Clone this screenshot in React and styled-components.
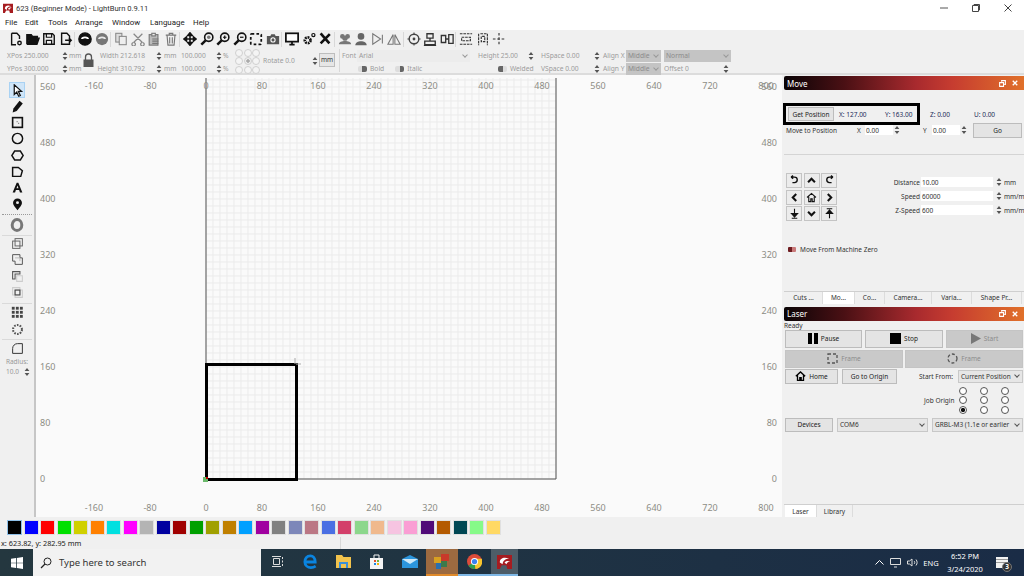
import React from "react";
import styled, { createGlobalStyle } from "styled-components";

const GlobalStyle = createGlobalStyle`
  html, body { margin: 0; padding: 0; background: #f0f0f0; }
  body { font-family: "Noto Sans", "Open Sans", sans-serif; }
  * { box-sizing: border-box; }
`;

const Page = styled.div`
  width: 1024px;
  height: 576px;
  overflow: hidden;
  display: flex;
  flex-direction: column;
  background: #f0f0f0;
  color: #222;
`;

/* ---------- title + menu ---------- */
const TitleBar = styled.div`
  height: 15px;
  padding: 1px 0 0 3px;
  background: #fff;
  display: flex;
  align-items: center;
  gap: 3px;
  font-family: Roboto, sans-serif;
  font-size: 7.600px;
  color: #333;
`;
const WindowButtons = styled.div`
  margin-left: auto;
  display: flex;
`;
const WindowButton = styled.div`
  width: 32px;
  height: 15px;
  display: flex;
  align-items: center;
  justify-content: center;
`;
const MenuBar = styled.div`
  height: 15px;
  background: #fff;
  display: flex;
  align-items: center;
  font-family: Roboto, sans-serif;
  font-size: 7.900px;
  color: #222;
  padding-left: 5px;
`;
const MenuItem = styled.span`
  width: ${({ $w }) => $w}px;
`;

/* ---------- main toolbar ---------- */
const Toolbar = styled.div`
  height: 18px;
  background: #f0f0f0;
  display: flex;
  align-items: center;
  padding-left: 8px;
`;
const ToolSlot = styled.div`
  width: 16.500px;
  height: 16px;
  display: flex;
  align-items: center;
  justify-content: center;
`;
const ToolSep = styled.div`
  width: 1px;
  height: 15px;
  background: #d8d8d8;
  margin-right: 2px;
`;

/* ---------- numeric properties bar ---------- */
const PropBar = styled.div`
  height: 27px;
  border-bottom: 2px solid #dcdcdc;
  background: #f0f0f0;
  display: flex;
  font-size: 6.700px;
  color: #9b9b9b;
`;
const PropGrid = styled.div`
  display: grid;
  grid-template-columns: ${({ $cols }) => $cols};
  grid-auto-rows: 13px;
  align-items: center;
  align-content: ${({ $center }) => ($center ? "center" : "start")};
  white-space: nowrap;
  margin-left: ${({ $ml }) => $ml || 0}px;
  padding-top: ${({ $center }) => ($center ? 0 : 1)}px;
`;
const Spin = styled.svg`
  display: block;
  width: 6px;
  height: 10px;
`;
const SpinBox = () => (
  <Spin viewBox="0 0 6 10">
    <path d="M3 1 5.400 4H.6zM3 9 .6 6h4.800z" fill="#555" />
  </Spin>
);
const LockBox = styled.div`
  width: 11px;
  margin-left: 1px;
  display: flex;
  align-items: center;
  justify-content: center;
`;
const Anchor = styled.div`
  margin-left: 3px;
  width: 27px;
  display: grid;
  grid-template-columns: repeat(3, 8.500px);
  grid-auto-rows: 8.300px;
  align-content: start;
  padding-top: 1px;
`;
const AnchorDot = styled.div`
  width: 8px;
  height: 8px;
  border-radius: 50%;
  border: 1px solid #d0d0d0;
  background: ${({ $on }) => ($on ? "radial-gradient(circle, #aaa 35%, #eee 45%)" : "#f4f4f4")};
`;
const UnitButton = styled.div`
  align-self: center;
  margin: -2px 0 0 1px;
  width: 16px;
  height: 14px;
  border: 1px solid #bdbdbd;
  background: #e6e6e6;
  color: #333;
  font-size: 6.500px;
  display: flex;
  align-items: center;
  justify-content: center;
`;
const BarSep = styled.div`
  width: 1px;
  margin: 1px 2px 1px 4px;
  background: #d8d8d8;
`;
const PropCombo = styled.div`
  height: 12px;
  background: ${({ $grey }) => ($grey ? "#c4c4c4" : "#ececec")};
  color: ${({ $grey }) => ($grey ? "#8b8b8b" : "#9b9b9b")};
  display: flex;
  align-items: center;
  justify-content: space-between;
  padding: 0 3px 0 2px;
  grid-column: ${({ $col }) => $col};
  &::after {
    content: "";
    width: 3px;
    height: 3px;
    margin-top: -2px;
    border-right: 1px solid #999;
    border-bottom: 1px solid #999;
    transform: rotate(45deg);
  }
`;
const MiniToggle = styled.span`
  display: inline-block;
  flex: none;
  width: 9px;
  height: 6px;
  border-radius: 2px;
  background: ${({ $left }) =>
    $left ? "linear-gradient(90deg, #ddd 50%, #666 50%)" : "linear-gradient(90deg, #666 55%, #ddd 55%)"};
  margin-right: 3px;
`;
const Cell = styled.div`
  display: flex;
  align-items: center;
  grid-column: ${({ $col }) => $col || "auto"};
  justify-content: ${({ $end, $between }) => ($end ? "flex-end" : $between ? "space-between" : "flex-start")};
  padding-left: ${({ $pl }) => $pl || 0}px;
  padding-right: ${({ $pr }) => $pr || 0}px;
`;
const GapText = styled.span`
  margin-right: ${({ $mr }) => $mr}px;
`;

/* ---------- body ---------- */
const Body = styled.div`
  height: 442px;
  display: flex;
`;
const ToolColumn = styled.div`
  width: 36px;
  flex: none;
  border-right: 2px solid #c6c6c6;
  background: #f0f0f0;
  display: flex;
  flex-direction: column;
  align-items: center;
  padding-top: 7px;
`;
const SideTool = styled.div`
  width: 16px;
  height: 16px;
  margin-bottom: 0.300px;
  display: flex;
  align-items: center;
  justify-content: center;
  background: ${({ $active }) => ($active ? "#cfe5f8" : "transparent")};
  border: 1px solid ${({ $active }) => ($active ? "#a9d2f3" : "transparent")};
`;
const SideSep = styled.div`
  width: 30px;
  height: 1px;
  margin: ${({ $m }) => $m};
  border-top: 1px ${({ $dotted }) => ($dotted ? "dotted #999" : "solid #dadada")};
`;
const RadiusLabel = styled.div`
  font-size: 6.500px;
  color: #999;
  line-height: 9px;
`;
const RadiusValue = styled.div`
  width: 30px;
  display: flex;
  align-items: center;
  justify-content: space-between;
  font-size: 6.500px;
  line-height: 11px;
  color: #999;
  padding: 0 2px 0 4px;
`;

const CanvasSvg = styled.svg`
  display: block;
  flex: none;
  width: 746px;
  height: 442px;
  background: #fafafa;
  font-family: "Noto Sans", sans-serif;
`;

/* ---------- right dock ---------- */
const Dock = styled.div`
  width: 242px;
  flex: none;
  background: #f0f0f0;
  display: flex;
  flex-direction: column;
  font-size: 6.500px;
  color: #333;
  padding-left: 2px;
`;
const DockTitle = styled.div`
  height: 14px;
  margin-top: ${({ $mt }) => $mt}px;
  flex: none;
  border-radius: 2px 0 0 2px;
  background: linear-gradient(90deg, #0a0406 0%, #4a1014 25%, #a82a2e 55%, #c63c30 70%, #e0702a 100%);
  color: #fff;
  font-size: 8px;
  padding: 0 6px 0 3px;
  display: flex;
  align-items: center;
  justify-content: space-between;
`;
const TitleIcons = styled.div`
  display: flex;
  gap: 6px;
  align-items: center;
`;
const PositionRow = styled.div`
  margin-top: 13px;
  display: flex;
  align-items: center;
  height: 22px;
  color: #1b2b58;
`;
const PositionBox = styled.div`
  width: 137px;
  height: 22px;
  margin-left: -1px;
  border: 3px solid #000;
  display: flex;
  align-items: center;
  padding-left: 2px;
`;
const DockButton = styled.div`
  flex: none;
  width: ${({ $w }) => $w}px;
  height: ${({ $h }) => $h || 15}px;
  margin-left: ${({ $ml }) => $ml || 0}px;
  border: 1px solid ${({ $off }) => ($off ? "#c4c4c4" : "#bcbcbc")};
  background: ${({ $off }) => ($off ? "#c9c9c9" : "#e4e4e4")};
  color: ${({ $off }) => ($off ? "#8c8c8c" : "#222")};
  display: flex;
  align-items: center;
  justify-content: center;
  gap: 3px;
  white-space: nowrap;
`;
const Coord = styled.span`
  flex: none;
  width: ${({ $w }) => ($w ? `${$w}px` : "auto")};
  margin-left: ${({ $ml }) => $ml || 0}px;
  white-space: nowrap;
`;
const MoveToRow = styled.div`
  margin-top: -2px;
  height: 14px;
  display: flex;
  align-items: center;
`;
const NumInput = styled.div`
  flex: none;
  width: ${({ $w }) => $w}px;
  height: 10px;
  margin-right: ${({ $mr }) => $mr || 1}px;
  background: #fff;
  display: flex;
  align-items: center;
  padding-left: 1px;
`;
const Rule = styled.div`
  height: 1px;
  margin-top: 17px;
  background: #d4d4d4;
`;
const JogRow = styled.div`
  margin-top: 18px;
  display: flex;
`;
const JogGrid = styled.div`
  margin-left: 2px;
  display: grid;
  grid-template-columns: repeat(3, 16px);
  grid-auto-rows: 15px;
  gap: 1.700px;
`;
const JogKey = styled.div`
  border: 1px solid #c4c4c4;
  background: #ececec;
  display: flex;
  align-items: center;
  justify-content: center;
`;
const JogFields = styled.div`
  display: grid;
  margin: 2px 0 0 46.600px;
  grid-template-columns: 37px 75px 6px auto;
  grid-auto-rows: 14px;
  align-items: center;
  white-space: nowrap;
`;
const FieldLabel = styled.div`
  text-align: right;
  padding-right: 1px;
`;
const ZeroRow = styled.div`
  margin: 24px 0 0 4px;
  height: 9px;
  display: flex;
  align-items: center;
  gap: 4px;
`;
const ZeroToggle = styled.span`
  width: 8px;
  height: 5px;
  border-radius: 1px;
  background: linear-gradient(90deg, #6e1c20 55%, #c97a7a 55%);
`;
const TabStrip = styled.div`
  height: 13px;
  flex: none;
  margin-top: ${({ $mt }) => $mt || 0}px;
  border-top: 1px solid #cfcfcf;
  display: flex;
  align-items: stretch;
`;
const Tab = styled.div`
  width: ${({ $w }) => $w}px;
  margin-left: ${({ $ml }) => $ml || 0}px;
  background: ${({ $on }) => ($on ? "#fff" : "#f0f0f0")};
  border-right: 1px solid #dcdcdc;
  display: flex;
  align-items: center;
  justify-content: center;
  white-space: nowrap;
`;
const ReadyText = styled.div`
  height: 9px;
  line-height: 9px;
`;
const ButtonRow = styled.div`
  margin-top: ${({ $mt }) => $mt ?? 2}px;
  padding-left: 1px;
  display: flex;
  align-items: center;
`;
const OriginArea = styled.div`
  display: flex;
  align-items: center;
  height: 31px;
  margin-top: 1px;
`;
const OriginLabel = styled.div`
  margin-left: 140px;
  width: 28.500px;
  white-space: nowrap;
`;
const RadioGrid = styled.div`
  display: grid;
  grid-template-columns: repeat(3, 21px);
  grid-auto-rows: 9.700px;
  justify-items: center;
  align-items: center;
`;
const Radio = styled.div`
  width: 8px;
  height: 8px;
  border-radius: 50%;
  border: 1px solid #555;
  background: ${({ $on }) => ($on ? "radial-gradient(circle, #111 45%, #fff 55%)" : "#fff")};
`;
const Combo = styled.div`
  flex: none;
  width: ${({ $w }) => $w}px;
  height: ${({ $h }) => $h || 13}px;
  margin-left: ${({ $ml }) => $ml || 0}px;
  background: #e6e6e6;
  border: 1px solid #c8c8c8;
  display: flex;
  align-items: center;
  justify-content: space-between;
  padding: 0 3px 0 2px;
  overflow: hidden;
  white-space: nowrap;
  &::after {
    content: "";
    flex: none;
    width: 3px;
    height: 3px;
    margin: -2px 0 0 2px;
    border-right: 1px solid #555;
    border-bottom: 1px solid #555;
    transform: rotate(45deg);
  }
`;
const DockSpacer = styled.div`
  flex: 1;
`;

/* ---------- palette + status ---------- */
const Palette = styled.div`
  height: 20px;
  background: #f0f0f0;
  display: flex;
  align-items: center;
  padding-left: 8px;
  gap: 3.500px;
`;
const Swatch = styled.div`
  width: 13px;
  height: 13px;
  background: ${({ $c }) => $c};
  outline: 1px solid ${({ $first }) => ($first ? "#8fc0e8" : "#e0e0e0")};
`;
const StatusBar = styled.div`
  height: 12px;
  background: #f0f0f0;
  display: flex;
  align-items: center;
  font-size: 7.300px;
  color: #222;
  padding-left: 1px;
`;
const StatusText = styled.div`
  width: 340px;
  height: 12px;
  line-height: 12px;
  border-right: 1px solid #d8d8d8;
`;

/* ---------- windows taskbar ---------- */
const Taskbar = styled.div`
  height: 27px;
  background: linear-gradient(90deg, #24373f 0%, #203442 40%, #1a2c46 100%);
  display: flex;
  align-items: stretch;
  color: #fff;
`;
const StartButton = styled.div`
  width: 33px;
  display: flex;
  align-items: center;
  justify-content: center;
`;
const SearchBox = styled.div`
  width: 228px;
  background: #f2f2f2;
  color: #333;
  font-size: 9.500px;
  display: flex;
  align-items: center;
  gap: 7px;
  padding-left: 7px;
`;
const TaskIcon = styled.div`
  width: ${({ $w }) => $w || 33}px;
  background: ${({ $bg }) => $bg || "transparent"};
  border-bottom: 2px solid ${({ $line }) => $line || "transparent"};
  display: flex;
  align-items: center;
  justify-content: center;
`;
const Tray = styled.div`
  margin-left: auto;
  display: flex;
  align-items: center;
  font-size: 7.500px;
`;
const TrayItem = styled.div`
  width: ${({ $w }) => $w}px;
  display: flex;
  align-items: center;
  justify-content: center;
`;
const Clock = styled.div`
  width: 46px;
  text-align: center;
  line-height: 13px;
  font-size: 7.500px;
`;
const Badge = styled.div`
  position: absolute;
  right: -4px;
  bottom: -4px;
  width: 10px;
  height: 10px;
  border-radius: 50%;
  background: #333;
  border: 1px solid #777;
  color: #fff;
  font-size: 6.500px;
  font-weight: 700;
  line-height: 8px;
  text-align: center;
`;
const NotifyIcon = styled.div`
  position: relative;
  width: 12px;
  height: 11px;
  margin: 0 16px 0 8px;
  background: linear-gradient(#f2f2f2 2px, #999 2px, #999 3px, #f2f2f2 3px, #f2f2f2 5px, #999 5px, #999 6px, #f2f2f2 6px);
`;

/* ---------- icons ---------- */
const Ico = ({ s = 14, vb = 16, children, ...rest }) => (
  <svg width={s} height={s} viewBox={`0 0 ${vb} ${vb}`} fill="none" stroke="#111" strokeWidth="1.600" {...rest}>
    {children}
  </svg>
);

const toolbarIcons = [
  [
    <><path d="M3 1.500h6l3 3V8M3 1.500V14.500h5" /><circle cx="12" cy="12.500" r="2" /></>,
    <path d="M1 14V3h5l1.500 2H13v2H4.500L2 14h10.500l2.500-7H4.500" fill="#111" />,
    <><path d="M2 2h10l2 2v10H2z" /><path d="M5 2v4h6V2M5 14V9.500h6V14" strokeWidth="1.400" /></>,
    <><path d="M3 1.500h6l3 3v9.500H3z" /><path d="M7 9.500h7M11.500 7l2.500 2.500L11.500 12" /></>,
  ],
  [
    <><circle cx="8" cy="8" r="7" fill="#111" /><path d="M3.500 8a4.500 3 0 0 1 9 0l-2 0a3 1.500 0 0 0-5 0z" fill="#fff" stroke="none" /></>,
    <><circle cx="8" cy="8" r="7" fill="#777" stroke="none" /><path d="M3.500 8a4.500 3 0 0 1 9 0l-2 0a3 1.500 0 0 0-5 0z" fill="#e8e8e8" stroke="none" /></>,
  ],
  [
    <g stroke="#888" strokeWidth="1.200"><rect x="2" y="1.500" width="7" height="10" fill="#ddd" /><rect x="6" y="5" width="8" height="9.500" fill="#eee" /></g>,
    <path d="M3 2l10 10M13 2 3 12M3 12a2 2 0 1 0 .1 0M13 12a2 2 0 1 0 .1 0" stroke="#888" strokeWidth="1.400" />,
    <g stroke="#777" strokeWidth="1.300"><rect x="2.500" y="3" width="10" height="12" fill="#bbb" /><rect x="5.500" y="1.500" width="4" height="3" fill="#eee" /><path d="M6 8h7M6 10.500h7M6 13h7" /></g>,
    <g stroke="#777" strokeWidth="1.300"><path d="M2 3.500h12M6 3V1.500h4V3M3.500 4l1 11h7l1-11M6.500 6v7M9.500 6v7" /></g>,
  ],
  [
    <path d="M8 1v14M1 8h14M8 1 5.500 4h5zM8 15l-2.500-3h5zM1 8l3-2.500v5zM15 8l-3-2.500v5z" fill="#111" strokeWidth="1.800" />,
    <><circle cx="10" cy="6" r="4.700" strokeWidth="1.800" /><circle cx="10" cy="6" r="2" fill="#777" stroke="none" /><path d="M6.500 9.500 1.500 14.500" strokeWidth="2.800" /></>,
    <><circle cx="10" cy="6" r="4.700" strokeWidth="1.800" /><path d="M8 6h4M10 4v4" strokeWidth="1.400" /><path d="M6.500 9.500 1.500 14.500" strokeWidth="2.800" /></>,
    <><circle cx="10" cy="6" r="4.700" strokeWidth="1.800" /><path d="M8 6h4" strokeWidth="1.400" /><path d="M6.500 9.500 1.500 14.500" strokeWidth="2.800" /></>,
    <rect x="2" y="2" width="12" height="12" rx="1" strokeDasharray="3 2.500" strokeWidth="2" />,
    <><path d="M1 4.500h4l1-2h4l1 2h4v9.500H1z" fill="#555" stroke="none" /><circle cx="8" cy="9" r="3" fill="#fff" stroke="none" /><circle cx="8" cy="9" r="1.800" fill="#555" stroke="none" /></>,
  ],
  [
    <><rect x="1" y="1.500" width="14" height="9.500" fill="#fff" strokeWidth="2" /><path d="M5 14.500h6M8 11v3" strokeWidth="2" /></>,
    <><circle cx="6.500" cy="9.500" r="3.300" strokeWidth="3" strokeDasharray="2 1" /><circle cx="13" cy="3.500" r="1.800" strokeWidth="1.400" /></>,
    <path d="M3 1.500 13 13M13.500 2.500 3 13" strokeWidth="3" />,
  ],
  [
    <g fill="#777" stroke="none"><circle cx="5" cy="5" r="2.700" /><circle cx="11" cy="5" r="2.700" /><circle cx="8" cy="7" r="3" /><path d="M1 14c0-5 14-5 14 0z" /></g>,
    <g fill="#666" stroke="none"><circle cx="8" cy="5" r="3.800" /><path d="M1.500 15c0-6 13-6 13 0z" /></g>,
    <path d="M2 2v12l9-6zM13 3v10" stroke="#777" strokeWidth="1.200" />,
    <path d="M1 14 7 3v11zM15 14 9 3v11z" stroke="#777" strokeWidth="1.200" />,
  ],
  [
    <><circle cx="8" cy="8" r="5.500" stroke="#444" /><circle cx="8" cy="8" r="1.600" fill="#444" stroke="none" /><path d="M8 .5v3M8 12.500v3M.5 8h3M12.500 8h3" stroke="#444" strokeWidth="1.200" /></>,
    <path d="M4.500 2h7v5h-7zM8 7v3M2 10.500h12v4H2zM1 15.500h14" stroke="#333" strokeWidth="1.500" />,
    <path d="M1.500 4h5v8h-5zM7 8h3M10 3h5v10h-5z" stroke="#333" strokeWidth="1.500" />,
  ],
  [
    <path d="M1 2h14M1 14h14M3 6h10v4H3z" stroke="#333" strokeWidth="1.300" strokeDasharray="3 1" />,
    <path d="M3 2v13M13 2v13M5 2h8M6 5v6h4V5z" stroke="#333" strokeWidth="1.300" strokeDasharray="3 1" />,
    <path d="M8 1v14M1 8h14" stroke="#333" strokeWidth="1.300" strokeDasharray="3 2" />,
  ],
];

const LightBurnLogo = ({ s = 10 }) => (
  <svg width={s} height={s} viewBox="0 0 16 16">
    <path d="M0 1h16v15H11l-1-4H5L3 16H0z" fill="#a61c20" />
    <path d="M3 9C3 4 8 3 13 5 9 5 6 7 6 11zM8 9c2-2 4-2 6-1-2 0-3 1-4 3z" fill="#fff" />
  </svg>
);

const sideTools = [
  <path d="M4 1v12l3-3 2.500 5 2-1-2.500-5h4z" fill="#fff" stroke="#111" strokeWidth="1.500" />,
  <path d="M2 15.500l1-5L10.500 1l4 3.200L7 13.500z" fill="#111" stroke="none" />,
  <><rect x="2" y="2" width="12" height="12" strokeWidth="2" /><path d="M7 7h1M9 9h1" strokeWidth="1" /></>,
  <circle cx="8" cy="8" r="6.300" strokeWidth="1.800" />,
  <path d="M4.500 2.500h7L15 8l-3.500 5.500h-7L1 8z" strokeWidth="1.800" />,
  <path d="M2 3h7l5 4-2 7H2z" strokeWidth="1.800" />,
  <path d="M2 14 7 2h2l5 12h-3l-1-3H6l-1 3zM6.800 9h2.400L8 5.500z" fill="#111" fillRule="evenodd" stroke="none" />,
  <path d="M8 15c-3-4-5.500-6.500-5.500-9a5.500 5.500 0 0 1 11 0c0 2.500-2.500 5-5.500 9zm0-7.500a1.800 1.800 0 1 0 0-3.600 1.800 1.800 0 0 0 0 3.600z" fill="#111" fillRule="evenodd" stroke="none" />,
];
const booleanTools = [
  <g stroke="#666" strokeWidth="1.200"><rect x="2" y="5" width="9" height="9" /><rect x="5" y="2" width="9" height="9" /></g>,
  <g stroke="#555" strokeWidth="1.200"><path d="M2 2h9v4h3v8H5v-4H2z" /><path d="M5 6h6v4" stroke="#bbb" /></g>,
  <g strokeWidth="1.300"><path d="M2 2h9v3H5v6H2z" stroke="#555" /><path d="M7 7h7v7H7z" stroke="#ccc" /></g>,
  <g strokeWidth="1.300"><path d="M2 2h9v9H2zM5 5h9v9H5z" stroke="#ccc" /><rect x="5" y="5" width="6" height="6" stroke="#444" /></g>,
];
const jogIcons = [
  <path d="M3 3h5a4 4 0 0 1 0 8H5M3 3l3-2M3 3l3 2.500" strokeWidth="2" />,
  <path d="M3 10.500 8 5.500l5 5" strokeWidth="3" />,
  <path d="M13 3H8a4 4 0 0 0 0 8h3M13 3l-3-2M13 3l-3 2.500" strokeWidth="2" />,
  <path d="M10.500 3 5.500 8l5 5" strokeWidth="3" />,
  <path d="M1.500 8 8 2l6.500 6M4 7v7h3v-4h2v4h3V7" strokeWidth="1.600" />,
  <path d="M5.500 3l5 5-5 5" strokeWidth="3" />,
  <path d="M8 1v9M3.500 8 8 13l4.500-5zM4 15h8" fill="#111" strokeWidth="1.600" />,
  <path d="M3 5.500l5 5 5-5" strokeWidth="3" />,
  <path d="M8 15V6M3.500 8 8 3l4.500 5zM4 1h8" fill="#111" strokeWidth="1.600" />,
];

const swatches = [
  "#000000", "#0000ff", "#ff0000", "#00e000", "#d0d000", "#ff8000", "#00e0e0", "#ff00ff", "#b4b4b4", "#0000a0",
  "#a00000", "#00a000", "#a0a000", "#c08000", "#00a0ff", "#a000a0", "#808080", "#7d87b9", "#bb7784", "#4a6fe3",
  "#d33f6a", "#8cd78c", "#f0b98d", "#f6c4e1", "#fa9ed4", "#500a78", "#b45a00", "#004754", "#86fa88", "#ffd964",
];

const range = (n) => Array.from({ length: n }, (_, i) => i);
const toX = (v) => 206 + v * 0.7;
const toY = (v) => 479 - v * 0.7;
const xLabels = [-160, -80, 0, 80, 160, 240, 320, 400, 480, 560, 640, 720, 800];
const yLabels = [560, 480, 400, 320, 240, 160, 80, 0];

// bed, grid and rulers, drawn in page coordinates
const Canvas = () => (
  <CanvasSvg viewBox="36 75 746 442">
    {range(51).map((i) => (
      <line key={`v${i}`} x1={206 + i * 7} x2={206 + i * 7} y1="78" y2="479" stroke="#ebebeb" />
    ))}
    {range(58).map((i) => (
      <line key={`h${i}`} x1="206" x2="556" y1={479 - i * 7} y2={479 - i * 7} stroke="#ebebeb" />
    ))}
    <path d="M206 78V479H556V78" stroke="#555" strokeWidth="1" fill="none" />
    <rect x="206.500" y="364.500" width="90" height="115" fill="none" stroke="#000" strokeWidth="3" />
    <path d="M295 358v6M296 364h5" stroke="#aaa" />
    <rect x="203" y="477" width="5" height="5" fill="#6cba6c" />
    <rect x="206" y="477" width="2" height="2" fill="#c00" />
    <g fontSize="9" fill="#8d8d85" textAnchor="middle">
      {xLabels.map((v) => (
        <text key={`t${v}`} x={toX(v)} y="89">{v}</text>
      ))}
      {xLabels.map((v) => (
        <text key={`b${v}`} x={toX(v)} y="511">{v}</text>
      ))}
    </g>
    <g fontSize="9" fill="#8d8d85">
      {yLabels.map((v) => (
        <text key={`l${v}`} x="40" y={toY(v) + 3}>{v}</text>
      ))}
    </g>
    <g fontSize="9" fill="#8d8d85" textAnchor="end">
      {yLabels.map((v) => (
        <text key={`r${v}`} x="777" y={toY(v) + 3}>{v}</text>
      ))}
    </g>
  </CanvasSvg>
);

const FloatClose = () => (
  <TitleIcons>
    <svg width="7" height="7" viewBox="0 0 8 8" fill="none" stroke="#fff" strokeWidth="1.200"><path d="M3 2V.7h4.300V5H6M.7 3h4.500v4.300H.7z" /></svg>
    <svg width="6" height="6" viewBox="0 0 8 8" fill="none" stroke="#fff" strokeWidth="1.800"><path d="M1 1l6 6M7 1 1 7" /></svg>
  </TitleIcons>
);

const PropertyBar = () => (
  <PropBar>
    <PropGrid $cols="55px 6px 14px" $ml={7}>
      <span>XPos 250.000</span><SpinBox /><Cell $pl={1}>mm</Cell>
      <span>YPos 300.000</span><SpinBox /><Cell $pl={1}>mm</Cell>
    </PropGrid>
    <LockBox>
      <svg width="11" height="15" viewBox="0 0 11 15" fill="none">
        <path d="M2.500 7V4a3 3 0 0 1 6 0v3" stroke="#555" strokeWidth="1.300" />
        <rect x=".5" y="6.500" width="10" height="7.500" fill="#555" />
      </svg>
    </LockBox>
    <PropGrid $cols="59px 6px 19px 35px 6px 10px" $ml={3}>
      <Cell $end $pr={11}>Width 212.618</Cell><SpinBox /><Cell $pl={2}>mm</Cell><span>100.000</span><SpinBox /><Cell $pl={1}>%</Cell>
      <Cell $end $pr={11}>Height 310.792</Cell><SpinBox /><Cell $pl={2}>mm</Cell><span>100.000</span><SpinBox /><Cell $pl={1}>%</Cell>
    </PropGrid>
    <Anchor>
      {range(9).map((i) => (
        <AnchorDot key={i} $on={i === 4} />
      ))}
    </Anchor>
    <PropGrid $cols="49px 6px" $ml={1} $center>
      <Cell>Rotate 0.0</Cell><SpinBox />
    </PropGrid>
    <UnitButton>mm</UnitButton>
    <BarSep />
    <PropGrid $cols="15px 113px 8px 39px 11px 6px 7px 53px 6px 3px 23px 35px 3px 67px">
      <Cell $col={1}>Font</Cell>
      <PropCombo $col={2}>Arial</PropCombo>
      <Cell $col={4}>Height 25.00</Cell>
      <Cell $col={6}><SpinBox /></Cell>
      <Cell $col={8}>HSpace 0.00</Cell>
      <Cell $col={9}><SpinBox /></Cell>
      <Cell $col={11}>Align X</Cell>
      <PropCombo $col={12} $grey>Middle</PropCombo>
      <PropCombo $col={14} $grey>Normal</PropCombo>
      <Cell $col={2} $pl={1}>
        <MiniToggle $left /><GapText $mr={11}>Bold</GapText>
        <MiniToggle $left />Italic
      </Cell>
      <Cell $col="4 / 7" $pl={20}><MiniToggle />Welded</Cell>
      <Cell $col={8}>VSpace 0.00</Cell>
      <Cell $col={9}><SpinBox /></Cell>
      <Cell $col={11}>Align Y</Cell>
      <PropCombo $col={12} $grey>Middle</PropCombo>
      <Cell $col={14} $between $pr={2}>Offset 0<SpinBox /></Cell>
    </PropGrid>
  </PropBar>
);

export default function App() {
  return (
    <Page>
      <GlobalStyle />
      <TitleBar>
        <LightBurnLogo />
        <span>623 (Beginner Mode) - LightBurn 0.9.11</span>
        <WindowButtons>
          <WindowButton>
            <svg width="8" height="8" viewBox="0 0 8 8"><path d="M0 4h8" stroke="#555" /></svg>
          </WindowButton>
          <WindowButton>
            <svg width="8" height="8" viewBox="0 0 8 8" fill="none" stroke="#444"><path d="M2 1.500V.5h5.500V6H6.500M.5 1.500H6.500V7.500H.5z" /></svg>
          </WindowButton>
          <WindowButton>
            <svg width="8" height="8" viewBox="0 0 8 8"><path d="M.5.5l7 7M7.500.5l-7 7" stroke="#444" /></svg>
          </WindowButton>
        </WindowButtons>
      </TitleBar>
      <MenuBar>
        <MenuItem $w={20}>File</MenuItem>
        <MenuItem $w={23}>Edit</MenuItem>
        <MenuItem $w={27}>Tools</MenuItem>
        <MenuItem $w={37}>Arrange</MenuItem>
        <MenuItem $w={38}>Window</MenuItem>
        <MenuItem $w={43}>Language</MenuItem>
        <MenuItem $w={20}>Help</MenuItem>
      </MenuBar>
      <Toolbar>
        {toolbarIcons.map((group, g) => (
          <React.Fragment key={g}>
            {group.map((icon, i) => (
              <ToolSlot key={i}><Ico s={14}>{icon}</Ico></ToolSlot>
            ))}
            {g < toolbarIcons.length - 1 && <ToolSep />}
          </React.Fragment>
        ))}
      </Toolbar>
      <PropertyBar />
      <Body>
        <ToolColumn>
          {sideTools.map((icon, i) => (
            <SideTool key={i} $active={i === 0}><Ico s={13}>{icon}</Ico></SideTool>
          ))}
          <SideSep $dotted $m="2px 0" />
          <SideTool>
            <Ico s={14}><ellipse cx="8" cy="8" rx="5.500" ry="6.200" stroke="#777" strokeWidth="3.400" /></Ico>
          </SideTool>
          <SideSep $m="1px 0 0" />
          {booleanTools.map((icon, i) => (
            <SideTool key={i}><Ico s={13}>{icon}</Ico></SideTool>
          ))}
          <SideSep $m="2px 0 1px" />
          <SideTool>
            <Ico s={13}>
              <g fill="#444" stroke="none">
                {range(9).map((i) => (
                  <rect key={i} x={1 + (i % 3) * 5} y={1 + Math.floor(i / 3) * 5} width="3.500" height="3.500" />
                ))}
              </g>
            </Ico>
          </SideTool>
          <SideTool>
            <Ico s={13}><circle cx="8" cy="8" r="5.500" stroke="#555" strokeWidth="2.500" strokeDasharray="2 1.500" /></Ico>
          </SideTool>
          <SideSep $m="1.500px 0 1px" />
          <SideTool>
            <Ico s={13}><path d="M2 14V8a6 6 0 0 1 6-6h6v12z" stroke="#333" strokeWidth="1.200" /></Ico>
          </SideTool>
          <RadiusLabel>Radius:</RadiusLabel>
          <RadiusValue>10.0<SpinBox /></RadiusValue>
        </ToolColumn>
        <Canvas />
        <Dock>
          <DockTitle $mt={1}>Move<FloatClose /></DockTitle>
          <PositionRow>
            <PositionBox>
              <DockButton $w={46} $h={14}>Get Position</DockButton>
              <Coord $w={46} $ml={5}>X: 127.00</Coord>
              <Coord>Y: 163.00</Coord>
            </PositionBox>
            <Coord $w={44} $ml={10}>Z: 0.00</Coord>
            <Coord>U: 0.00</Coord>
          </PositionRow>
          <MoveToRow>
            <Coord $w={71} $ml={2}>Move to Position</Coord>
            <Coord $w={8}>X</Coord>
            <NumInput $w={28}>0.00</NumInput>
            <SpinBox />
            <Coord $w={9} $ml={23}>Y</Coord>
            <NumInput $w={28}>0.00</NumInput>
            <SpinBox />
            <DockButton $w={49} $ml={6}>Go</DockButton>
          </MoveToRow>
          <Rule />
          <JogRow>
            <JogGrid>
              {jogIcons.map((icon, i) => (
                <JogKey key={i}><Ico s={11}>{icon}</Ico></JogKey>
              ))}
            </JogGrid>
            <JogFields>
              <FieldLabel>Distance</FieldLabel><NumInput $w={72}>10.00</NumInput><SpinBox /><Coord $ml={2}>mm</Coord>
              <FieldLabel>Speed</FieldLabel><NumInput $w={72}>60000</NumInput><SpinBox /><Coord $ml={2}>mm/m</Coord>
              <FieldLabel>Z-Speed</FieldLabel><NumInput $w={72}>600</NumInput><SpinBox /><Coord $ml={2}>mm/m</Coord>
            </JogFields>
          </JogRow>
          <ZeroRow>
            <ZeroToggle />
            <span>Move From Machine Zero</span>
          </ZeroRow>
          <TabStrip $mt={36.500}>
            <Tab $w={38} $ml={1}>Cuts ...</Tab>
            <Tab $w={32} $on>Mo...</Tab>
            <Tab $w={30}>Co...</Tab>
            <Tab $w={47}>Camera...</Tab>
            <Tab $w={40}>Varia...</Tab>
            <Tab $w={50}>Shape Pr...</Tab>
          </TabStrip>
          <DockTitle $mt={3}>Laser<FloatClose /></DockTitle>
          <ReadyText>Ready</ReadyText>
          <ButtonRow $mt={0}>
            <DockButton $w={77} $h={18}>
              <svg width="10" height="11" viewBox="0 0 10 11"><path d="M0 0h4v11H0zM6 0h4v11H6z" /></svg>Pause
            </DockButton>
            <DockButton $w={78} $h={18} $ml={3}>
              <svg width="11" height="11" viewBox="0 0 11 11"><path d="M0 0h11v11H0z" /></svg>Stop
            </DockButton>
            <DockButton $w={77} $h={18} $ml={3} $off>
              <svg width="10" height="11" viewBox="0 0 10 11"><path d="M0 0l10 5.500L0 11z" fill="#777" /></svg>Start
            </DockButton>
          </ButtonRow>
          <ButtonRow>
            <DockButton $w={118} $h={18} $off>
              <svg width="11" height="11" viewBox="0 0 11 11" fill="none"><rect x="1" y="1" width="9" height="9" stroke="#555" strokeWidth="1.300" strokeDasharray="3 2" /></svg>Frame
            </DockButton>
            <DockButton $w={118} $h={18} $ml={2} $off>
              <svg width="11" height="11" viewBox="0 0 11 11" fill="none"><circle cx="5.500" cy="5.500" r="4.500" stroke="#555" strokeWidth="1.300" strokeDasharray="3 2" /></svg>Frame
            </DockButton>
          </ButtonRow>
          <ButtonRow $mt={1}>
            <DockButton $w={53}>
              <svg width="11" height="10" viewBox="0 0 16 15" fill="none" stroke="#000" strokeWidth="2"><path d="M1 8l7-6.500L15 8M3.500 6.500V14H7v-4h2v4h3.500V6.500" /></svg>Home
            </DockButton>
            <DockButton $w={55} $ml={4}>Go to Origin</DockButton>
            <Coord $w={39} $ml={22}>Start From:</Coord>
            <Combo $w={65}>Current Position</Combo>
          </ButtonRow>
          <OriginArea>
            <OriginLabel>Job Origin</OriginLabel>
            <RadioGrid>
              {range(9).map((i) => (
                <Radio key={i} $on={i === 6} />
              ))}
            </RadioGrid>
          </OriginArea>
          <ButtonRow>
            <DockButton $w={48} $h={14}>Devices</DockButton>
            <Combo $w={91} $h={14} $ml={4}>COM6</Combo>
            <Combo $w={91} $h={14} $ml={4}>GRBL-M3 (1.1e or earlier</Combo>
          </ButtonRow>
          <DockSpacer />
          <TabStrip>
            <Tab $w={32} $ml={1} $on>Laser</Tab>
            <Tab $w={36}>Library</Tab>
          </TabStrip>
        </Dock>
      </Body>
      <Palette>
        {swatches.map((c, i) => (
          <Swatch key={c} $c={c} $first={i === 0} />
        ))}
      </Palette>
      <StatusBar>
        <StatusText>x: 623.82, y: 282.95 mm</StatusText>
      </StatusBar>
      <Taskbar>
        <StartButton>
          <svg width="12" height="12" viewBox="0 0 12 12"><path d="M0 1.700 5 1v4.700H0zM5.800.9 12 0v5.700H5.800zM0 6.300h5V11L0 10.300zM5.800 6.300H12V12l-6.200-.9z" fill="#fff" /></svg>
        </StartButton>
        <SearchBox>
          <svg width="12" height="12" viewBox="0 0 12 12" fill="none" stroke="#222"><circle cx="7.500" cy="4.500" r="3.500" /><path d="M5 7 1 11" strokeWidth="1.300" /></svg>
          Type here to search
        </SearchBox>
        <TaskIcon $w={33}>
          <svg width="12" height="11" viewBox="0 0 12 11" fill="none" stroke="#ddd"><path d="M1.500 2.500h6v6h-6zM0 .5h9M0 10.500h9M10.500 1v2M10.500 4.500v2M10.500 8v2" /></svg>
        </TaskIcon>
        <TaskIcon>
          <svg width="15" height="15" viewBox="0 0 16 16" fill="none" stroke="#0a84e0" strokeWidth="3"><path d="M2 8.500h11C13 4 10.500 2 8 2 4 2 2 5 2 8.500S5 14.500 8.500 14.500c2 0 3.500-.5 5-1.500" /></svg>
        </TaskIcon>
        <TaskIcon>
          <svg width="15" height="13" viewBox="0 0 15 13"><path d="M0 0h6l1.500 2H15v11H0z" fill="#f2c34c" /><path d="M3 7h9v6H3z" fill="#3b8fd6" /><path d="M5 9h5v4H5z" fill="#f2c34c" /></svg>
        </TaskIcon>
        <TaskIcon>
          <svg width="15" height="15" viewBox="0 0 15 15"><path d="M1 4h13v11H1z" fill="#f4f4f4" /><path d="M5 4V1h5v3" fill="none" stroke="#f4f4f4" /><path d="M5 6h2v2H5z" fill="#e2502a" /><path d="M8 6h2v2H8z" fill="#6db33f" /><path d="M5 9h2v2H5z" fill="#1e88e5" /><path d="M8 9h2v2H8z" fill="#f4b400" /></svg>
        </TaskIcon>
        <TaskIcon>
          <svg width="16" height="13" viewBox="0 0 16 13"><path d="M0 4 8 0l8 4v9H0z" fill="#2c95dc" /><path d="M0 4l8 5 8-5" fill="#cde8f8" /></svg>
        </TaskIcon>
        <TaskIcon $w={32} $bg="#9c6a40" $line="#e08a2a">
          <svg width="16" height="15" viewBox="0 0 16 15"><path d="M0 3h7v6H0z" fill="#d8a020" /><path d="M7 0h8v7H7z" fill="#c83a2a" /><path d="M7 7h6v6H7z" fill="#3c7a4a" /><path d="M2 9h5v6H2z" fill="#2a70b0" /></svg>
        </TaskIcon>
        <TaskIcon $w={33} $line="#7fb8e6">
          <svg width="15" height="15" viewBox="0 0 16 16"><circle cx="8" cy="8" r="8" fill="#dd4b3a" /><path d="M8 8 1.500 12.500A8 8 0 0 0 9 16z" fill="#2e9e4f" /><path d="M8 8l1 8A8 8 0 0 0 15.800 5H8z" fill="#f7c52d" /><circle cx="8" cy="8" r="3.800" fill="#fff" /><circle cx="8" cy="8" r="2.800" fill="#3a82f0" /></svg>
        </TaskIcon>
        <TaskIcon $w={27} $bg="#4d5d68" $line="#7fb8e6">
          <LightBurnLogo s={15} />
        </TaskIcon>
        <Tray>
          <TrayItem $w={16}>
            <svg width="9" height="5" viewBox="0 0 9 5" fill="none" stroke="#fff"><path d="M.5 4.500l4-4 4 4" /></svg>
          </TrayItem>
          <TrayItem $w={17}>
            <svg width="11" height="10" viewBox="0 0 11 10" fill="none" stroke="#ddd"><path d="M.5.5h10v6H.5zM4 9h3" /></svg>
          </TrayItem>
          <TrayItem $w={16}>
            <svg width="11" height="9" viewBox="0 0 11 9" fill="none" stroke="#ddd"><path d="M.5 3h2L5 1v7L2.500 6h-2zM7 3c1 1 1 2 0 3M9 1.500c1.500 2 1.500 4 0 6" /></svg>
          </TrayItem>
          <TrayItem $w={22}>ENG</TrayItem>
          <Clock>6:52 PM<br />3/24/2020</Clock>
          <NotifyIcon><Badge>3</Badge></NotifyIcon>
        </Tray>
      </Taskbar>
    </Page>
  );
}
